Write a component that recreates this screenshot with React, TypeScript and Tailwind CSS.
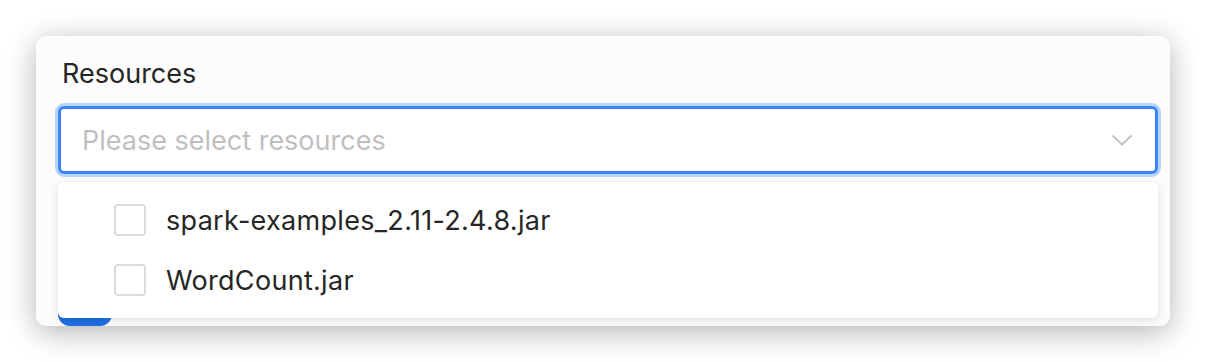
import React from "react";

function Checkbox() {
  return <span className="block w-[32px] h-[32px] rounded-[4px] border-2 border-[#dcdcdc] bg-white shrink-0" />;
}

function Item({ label }: { label: string }) {
  return (
    <div className="flex items-center h-[60px] pl-[56px] gap-[20px]">
      <Checkbox />
      <span className="text-[27px] leading-none text-[#262626] tracking-[0.3px]">{label}</span>
    </div>
  );
}

export default function App() {
  return (
    <div
      className="w-[1206px] h-[362px] bg-white pt-[36px] pl-[36px]"
      style={{ fontFamily: "Inter, 'Noto Sans', sans-serif" }}
    >
      <div className="relative w-[1134px] h-[290px] rounded-[10px] bg-[#fcfcfc] shadow-[0_6px_30px_rgba(0,0,0,0.3)] overflow-hidden pl-[22px] pr-[12px]">
        <div className="pt-[22px] text-[27px] leading-[32px] text-[#262626] pl-[4px]">Resources</div>
        <div className="mt-[16px] h-[68px] rounded-[6px] border-[3px] border-[#3a85f6] bg-white shadow-[0_0_0_3px_rgba(160,200,252,0.75)] flex items-center pl-[21px] pr-[22px]">
          <span className="flex-1 text-[27px] leading-none text-[#bfbfbf]">Please select resources</span>
          <svg width="22" height="13" viewBox="0 0 22 13" fill="none">
            <polyline points="1.5,1.5 11,10.5 20.5,1.5" stroke="#c4c4c4" strokeWidth="2" />
          </svg>
        </div>
        <div className="mt-[116px] w-[54px] h-[36px] rounded-[12px] bg-[#1f6fe6]" />
        <div className="absolute left-[22px] top-[146px] w-[1100px] h-[136px] rounded-[6px] bg-white shadow-[0_2px_10px_rgba(0,0,0,0.12)] py-[8px]">
          <Item label="spark-examples_2.11-2.4.8.jar" />
          <Item label="WordCount.jar" />
        </div>
      </div>
    </div>
  );
}
